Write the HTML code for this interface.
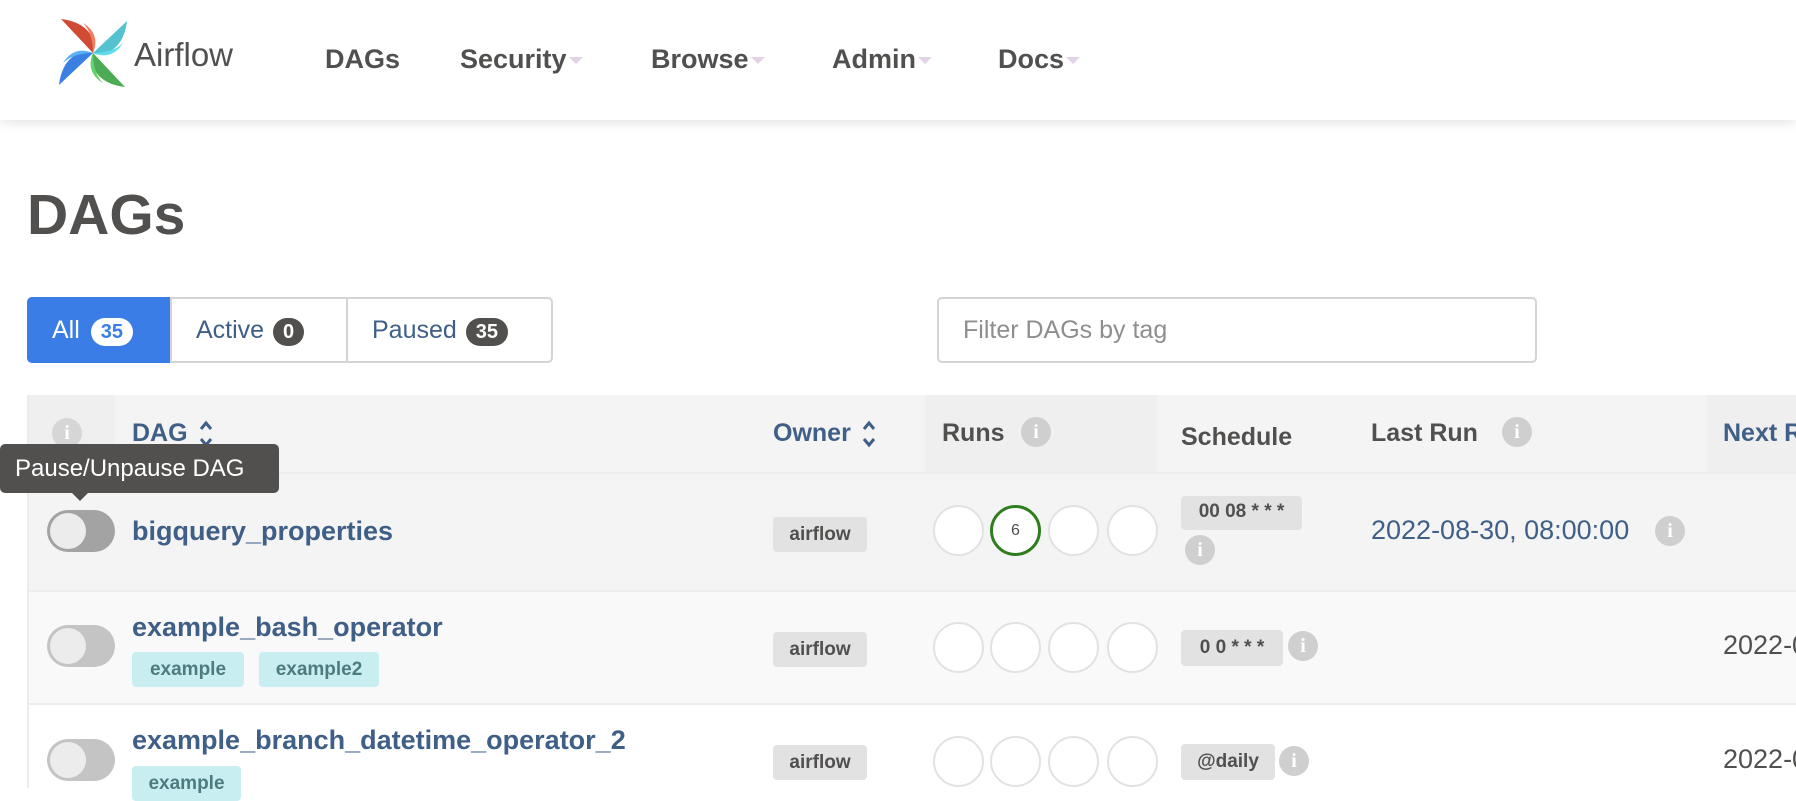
<!DOCTYPE html>
<html><head><meta charset="utf-8"><style>
*{box-sizing:border-box;margin:0;padding:0}
body{width:1796px;height:788px;overflow:hidden;background:#fff;font-family:"Liberation Sans",Arial,sans-serif;position:relative;color:#51504f}
.a{position:absolute;white-space:nowrap}
.nav{left:0;top:0;width:1796px;height:120px;background:#fff;box-shadow:0 2px 12px rgba(0,0,0,.12);z-index:2}
.ni{position:absolute;top:44px;font-size:27px;font-weight:bold;color:#51504f}
.car{display:inline-block;width:0;height:0;border-left:7px solid transparent;border-right:7px solid transparent;border-top:7px solid #e2d2e6;vertical-align:middle;margin-left:2px}
.lk{color:#3f5f87;font-weight:bold}
.badge{display:inline-block;border-radius:14px;font-weight:bold;font-size:20px;padding:3px 10px;line-height:22px}
.circ{position:absolute;width:51px;height:51px;border-radius:50%;border:2px solid #e2e2e2;background:#fff;text-align:center;line-height:47px;font-size:16px}
.info{position:absolute;width:30px;height:30px;border-radius:50%;background:#cfcfcf;color:#fff;font-weight:bold;font-size:20px;text-align:center;line-height:30px;font-family:"Liberation Serif",serif}
.gb{position:absolute;background:#e2e2e2;border-radius:4px;font-weight:bold;font-size:19px;color:#51504f;text-align:center;white-space:nowrap}
.tag{position:absolute;background:#c9eef2;border-radius:4px;color:#4d7c7f;font-weight:bold;font-size:19px;text-align:center;line-height:35px;height:35px}
.tog{position:absolute;left:47px;width:68px;height:42px;border-radius:21px;background:#c4c4c4}
.tog::after{content:"";position:absolute;left:3px;top:3px;width:36px;height:36px;border-radius:50%;background:#ececec}
.hd{position:absolute;top:419px;font-size:25px;font-weight:bold;white-space:nowrap}
.sort{display:inline-block;vertical-align:middle;margin-left:10px}
</style></head><body>
<div class="a nav">
<svg class="a" style="left:57px;top:17px" width="72" height="72" viewBox="0 0 72 72">
<path d="M36 36 L4 2 C22 4 40 14 36 36Z" fill="#d14a33"/>
<path d="M36 36 C36 22 32 12 26 6 C36 12 42 22 36 36Z" fill="#ef7e62"/>
<path d="M36 36 L70 4 C68 22 58 40 36 36Z" fill="#54c2d0"/>
<path d="M36 36 C50 36 60 32 66 26 C60 36 50 42 36 36Z" fill="#62dded"/>
<path d="M36 36 L68 70 C50 68 32 58 36 36Z" fill="#4cab55"/>
<path d="M36 36 C36 50 40 60 46 66 C36 60 30 50 36 36Z" fill="#65d16c"/>
<path d="M36 36 L2 68 C4 50 14 32 36 36Z" fill="#3b7fe2"/>
<path d="M36 36 C22 36 12 40 6 46 C12 36 22 30 36 36Z" fill="#5ab1f3"/>
</svg>
<div class="a" style="left:134px;top:36px;font-size:33px;color:#51504f">Airflow</div>
<div class="ni" style="left:325px">DAGs</div>
<div class="ni" style="left:460px">Security<span class="car"></span></div>
<div class="ni" style="left:651px">Browse<span class="car"></span></div>
<div class="ni" style="left:832px">Admin<span class="car"></span></div>
<div class="ni" style="left:998px">Docs<span class="car"></span></div>
</div>
<div class="a" style="left:27px;top:182px;font-size:57px;font-weight:bold;color:#51504f">DAGs</div>
<div class="a" style="left:27px;top:297px;width:526px;height:66px;border:2px solid #d4d4d4;border-radius:5px"></div>
<div class="a" style="left:27px;top:297px;width:143px;height:66px;background:#3a7de6;border-radius:5px 0 0 5px;color:#fff;font-size:25px;line-height:66px;padding-left:25px">All <span class="badge" style="background:#fff;color:#3a7de6;margin-left:4px">35</span></div>
<div class="a" style="left:170px;top:297px;width:2px;height:66px;background:#d4d4d4"></div>
<div class="a" style="left:196px;top:297px;font-size:25px;line-height:66px;color:#3f5f87">Active <span class="badge" style="background:#51504f;color:#fff;margin-left:2px">0</span></div>
<div class="a" style="left:346px;top:297px;width:2px;height:66px;background:#d4d4d4"></div>
<div class="a" style="left:372px;top:297px;font-size:25px;line-height:66px;color:#3f5f87">Paused <span class="badge" style="background:#51504f;color:#fff;margin-left:2px">35</span></div>
<div class="a" style="left:937px;top:297px;width:600px;height:66px;border:2px solid #d4d4d4;border-radius:5px;font-size:25px;color:#8e8e8e;line-height:62px;padding-left:24px">Filter DAGs by tag</div>
<div class="a" style="left:27px;top:395px;width:1769px;height:77px;background:#f4f4f4"></div>
<div class="a" style="left:27px;top:395px;width:88px;height:77px;background:#efefef"></div>
<div class="a" style="left:925px;top:395px;width:232px;height:77px;background:#efefef"></div>
<div class="a" style="left:1707px;top:395px;width:89px;height:77px;background:#efefef"></div>
<div class="a" style="left:27px;top:472px;width:1769px;height:118px;background:#f4f4f4;border-top:2px solid #ececec"></div>
<div class="a" style="left:27px;top:590px;width:1769px;height:113px;background:#f9f9f9;border-top:2px solid #ececec"></div>
<div class="a" style="left:27px;top:703px;width:1769px;height:85px;background:#fff;border-top:2px solid #ececec"></div>
<div class="a" style="left:27px;top:395px;width:2px;height:393px;background:#ececec"></div>
<div class="info" style="left:52px;top:418px;background:#d6d6d6">i</div>
<div class="hd lk" style="left:132px">DAG<svg class="sort" width="16" height="30" viewBox="0 0 16 30"><path d="M3 10 L8 4 L13 10 M3 20 L8 26 L13 20" fill="none" stroke="#3f5f87" stroke-width="3"/></svg></div>
<div class="hd lk" style="left:773px">Owner<svg class="sort" width="16" height="30" viewBox="0 0 16 30"><path d="M3 10 L8 4 L13 10 M3 20 L8 26 L13 20" fill="none" stroke="#3f5f87" stroke-width="3"/></svg></div>
<div class="hd" style="left:942px">Runs</div><div class="info" style="left:1021px;top:417px">i</div>
<div class="hd" style="left:1181px;top:423px">Schedule</div>
<div class="hd" style="left:1371px">Last Run</div><div class="info" style="left:1502px;top:417px">i</div>
<div class="hd lk" style="left:1723px">Next Run</div>
<div class="a" style="left:0;top:444px;width:279px;height:49px;background:#51504f;border-radius:5px;color:#fff;font-size:24px;line-height:49px;padding-left:15px;z-index:3">Pause/Unpause DAG</div>
<div class="a" style="left:71px;top:492px;width:0;height:0;border-left:9px solid transparent;border-right:9px solid transparent;border-top:9px solid #51504f;z-index:3"></div>
<div class="tog" style="top:510px;background:#a3a3a3"></div>
<div class="a lk" style="left:132px;top:516px;font-size:27px">bigquery_properties</div>
<div class="gb" style="left:773px;top:517px;width:94px;height:35px;line-height:35px">airflow</div>
<div class="circ" style="left:933px;top:505px"></div>
<div class="circ" style="left:990px;top:505px;border:3px solid #2e7d1e;line-height:45px">6</div>
<div class="circ" style="left:1048px;top:505px"></div>
<div class="circ" style="left:1107px;top:505px"></div>
<div class="gb" style="left:1181px;top:496px;width:121px;height:34px;line-height:32px">00 08 * * *</div>
<div class="info" style="left:1185px;top:535px">i</div>
<div class="a" style="left:1371px;top:515px;font-size:27px;color:#3f5f87">2022-08-30, 08:00:00</div>
<div class="info" style="left:1655px;top:516px">i</div>
<div class="tog" style="top:625px"></div>
<div class="a lk" style="left:132px;top:612px;font-size:27px">example_bash_operator</div>
<div class="tag" style="left:132px;top:652px;width:112px">example</div>
<div class="tag" style="left:259px;top:652px;width:120px">example2</div>
<div class="gb" style="left:773px;top:632px;width:94px;height:35px;line-height:35px">airflow</div>
<div class="circ" style="left:933px;top:622px"></div>
<div class="circ" style="left:990px;top:622px"></div>
<div class="circ" style="left:1048px;top:622px"></div>
<div class="circ" style="left:1107px;top:622px"></div>
<div class="gb" style="left:1181px;top:630px;width:102px;height:36px;line-height:36px">0 0 * * *</div>
<div class="info" style="left:1288px;top:631px">i</div>
<div class="a" style="left:1723px;top:630px;font-size:27px;color:#51504f">2022-08-30</div>
<div class="tog" style="top:739px"></div>
<div class="a lk" style="left:132px;top:725px;font-size:27px">example_branch_datetime_operator_2</div>
<div class="tag" style="left:132px;top:766px;width:109px">example</div>
<div class="gb" style="left:773px;top:745px;width:94px;height:35px;line-height:35px">airflow</div>
<div class="circ" style="left:933px;top:736px"></div>
<div class="circ" style="left:990px;top:736px"></div>
<div class="circ" style="left:1048px;top:736px"></div>
<div class="circ" style="left:1107px;top:736px"></div>
<div class="gb" style="left:1181px;top:744px;width:94px;height:36px;line-height:36px">@daily</div>
<div class="info" style="left:1279px;top:746px">i</div>
<div class="a" style="left:1723px;top:744px;font-size:27px;color:#51504f">2022-08-30</div>
</body></html>
